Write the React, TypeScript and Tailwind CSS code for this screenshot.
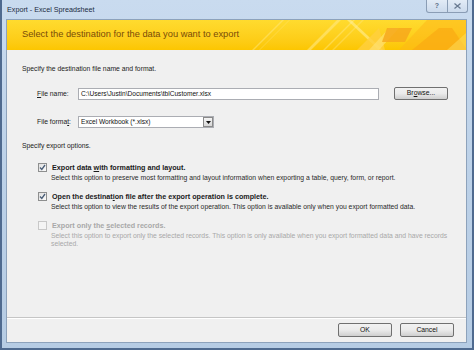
import React from "react";

const F = { fontFamily: '"Liberation Sans", Arial, sans-serif' };

function Check({ checked, disabled }: { checked?: boolean; disabled?: boolean }) {
  return (
    <div
      className={
        "w-[9px] h-[9px] border flex items-center justify-center shrink-0 " +
        (disabled ? "border-[#c8c8c8] bg-[#f4f4f4]" : "border-[#8e8f8f] bg-gradient-to-br from-[#e0e0e0] to-[#fbfbfb]")
      }
    >
      {checked && (
        <svg width="7" height="7" viewBox="0 0 7 7">
          <path d="M1 3.5 L2.8 5.5 L6 1" stroke="#4a5e78" strokeWidth="1.3" fill="none" />
        </svg>
      )}
    </div>
  );
}

function Option({
  title,
  desc,
  checked,
  disabled,
}: {
  title: React.ReactNode;
  desc: React.ReactNode;
  checked?: boolean;
  disabled?: boolean;
}) {
  return (
    <div className="flex flex-col">
      <div className="flex items-center h-[11px] pl-[31px] gap-[5px]">
        <Check checked={checked} disabled={disabled} />
        <span className={"text-[7.2px] font-bold leading-[11px] " + (disabled ? "text-[#a8a8a8]" : "text-[#1a1a1a]")}>
          {title}
        </span>
      </div>
      <div
        className={
          "pl-[44px] pr-[2px] text-[6.8px] leading-[8px] mt-[1px] whitespace-nowrap " +
          (disabled ? "text-[#a8a8a8]" : "text-[#2a2a2a]")
        }
      >
        {desc}
      </div>
    </div>
  );
}

const btn =
  "border border-[#707070] rounded-[2px] bg-gradient-to-b from-[#f2f2f2] via-[#ebebeb] to-[#cfcfcf] flex items-center justify-center text-[6.8px] text-[#111]";

export default function App() {
  return (
    <div
      className="w-[474px] h-[350px] flex flex-col bg-gradient-to-b from-[#c9dbef] via-[#bcd1e8] to-[#b6cce4] border-l-2 border-r-2 border-b-2 border-[#4f6a8f] overflow-hidden"
      style={F}
    >
      {/* title bar */}
      <div className="h-[19px] flex items-center shrink-0 relative">
        <span className="text-[7.2px] text-[#1b2a3e] pl-[5px] pt-[1px] leading-[10px] whitespace-nowrap">
          Export - Excel Spreadsheet
        </span>
        <div className="absolute right-[4px] top-0 w-[42px] h-[13px] flex border border-t-0 border-[#8a9db5] rounded-b-[3px] bg-gradient-to-b from-[#e2ebf6] to-[#cbdaec]">
          <div className="w-[21px] flex items-center justify-center border-r border-[#8a9db5] text-[7px] text-[#5d6f88] font-bold">
            ?
          </div>
          <div className="flex-1 flex items-center justify-center">
            <svg width="7" height="6" viewBox="0 0 7 6">
              <path d="M0.5 0.5 L6.5 5.5 M6.5 0.5 L0.5 5.5" stroke="#66788f" strokeWidth="1.2" />
            </svg>
          </div>
        </div>
      </div>

      {/* client */}
      <div className="ml-[4px] mr-[5px] flex-1 flex flex-col border border-[#8da2bb] bg-[#f0f0f0]">
        {/* banner */}
        <div className="h-[30px] shrink-0 relative overflow-hidden bg-gradient-to-b from-[#ffdb2e] to-[#fcc600] flex items-center">
          <svg className="absolute inset-0" width="460" height="30" viewBox="0 0 460 30">
            <polygon points="245,30 275,0 277,0 247,30" fill="#ffe780" opacity="0.5" />
            <polygon points="252,30 282,0 283,0 253,30" fill="#ffe780" opacity="0.4" />
            <polygon points="300,30 330,0 334,0 304,30" fill="#ffe780" opacity="0.6" />
            <polygon points="316,30 346,0 348,0 318,30" fill="#ffe780" opacity="0.5" />
            <polygon points="325,30 355,0 357,0 327,30" fill="#ffe780" opacity="0.4" />
            <polygon points="340,0 372,30 376,30 344,0" fill="#fff0a0" opacity="0.55" />
            <polygon points="350,30 372,8 378,30" fill="#ffd040" opacity="0.8" />
            <polygon points="362,30 382,8 392,8 372,30" fill="#ffe37a" opacity="0.6" />
            <polygon points="380,8 405,8 398,22 375,22" fill="#f7a81c" opacity="0.85" />
            <polygon points="392,30 420,0 460,0 460,30" fill="#fdb81a" opacity="0.55" />
            <polygon points="405,30 432,8 445,8 460,30" fill="#f9a913" opacity="0.7" />
            <polygon points="440,30 460,12 460,30" fill="#fde060" opacity="0.5" />
          </svg>
          <span className="relative pl-[15px] text-[9.3px] text-[#7a4c08]">
            Select the destination for the data you want to export
          </span>
        </div>

        {/* content */}
        <div className="flex-1 flex flex-col text-[#222]">
          <div className="pl-[15px] pt-[15px] text-[6.8px] leading-[8px]">
            Specify the destination file name and format.
          </div>

          <div className="flex items-center mt-[14px] h-[13px]">
            <span className="pl-[30px] w-[71px] text-[6.8px] leading-[8px]">
              <u>F</u>ile name:
            </span>
            <div className="w-[301px] h-[12px] bg-white border border-[#abadb3] flex items-center pl-[2px] text-[6.6px] text-[#111]">
              C:\Users\Justin\Documents\tblCustomer.xlsx
            </div>
            <div className={"ml-[15px] w-[54px] h-[13px] " + btn}>
              Br<u>o</u>wse...
            </div>
          </div>

          <div className="flex items-center mt-[16px] h-[12px]">
            <span className="pl-[30px] w-[71px] text-[6.8px] leading-[8px]">
              File forma<u>t</u>:
            </span>
            <div className="w-[136px] h-[12px] bg-white border border-[#abadb3] flex items-center text-[6.6px] text-[#111]">
              <span className="flex-1 pl-[2px]">Excel Workbook (*.xlsx)</span>
              <div className="w-[10px] h-[10px] border border-[#8a8a8a] bg-gradient-to-b from-[#f5f5f5] to-[#d6d6d6] flex items-center justify-center">
                <svg width="5" height="3" viewBox="0 0 5 3">
                  <polygon points="0,0 5,0 2.5,3" fill="#111" />
                </svg>
              </div>
            </div>
          </div>

          <div className="pl-[15px] mt-[14px] text-[6.8px] leading-[8px]">Specify export options.</div>

          <div className="mt-[12px] flex flex-col gap-[9px]">
            <Option
              checked
              title={
                <>
                  Export data <u>w</u>ith formatting and layout.
                </>
              }
              desc="Select this option to preserve most formatting and layout information when exporting a table, query, form, or report."
            />
            <Option
              checked
              title={
                <>
                  Open the destinat<u>i</u>on file after the export operation is complete.
                </>
              }
              desc="Select this option to view the results of the export operation. This option is available only when you export formatted data."
            />
            <Option
              disabled
              title={
                <>
                  Export only the <u>s</u>elected records.
                </>
              }
              desc={
                <>
                  Select this option to export only the selected records. This option is only available when you export formatted data and have records
                  <br />
                  selected.
                </>
              }
            />
          </div>
        </div>

        {/* footer */}
        <div className="h-[25px] shrink-0 border-t border-[#c5c5c5] shadow-[inset_0_1px_0_#ffffff] flex items-start justify-end pr-[12px] pt-[5px] gap-[8px]">
          <div className={"w-[54px] h-[14px] " + btn}>OK</div>
          <div className={"w-[54px] h-[14px] " + btn}>Cancel</div>
        </div>
      </div>
      <div className="h-[5px] shrink-0" />
    </div>
  );
}
